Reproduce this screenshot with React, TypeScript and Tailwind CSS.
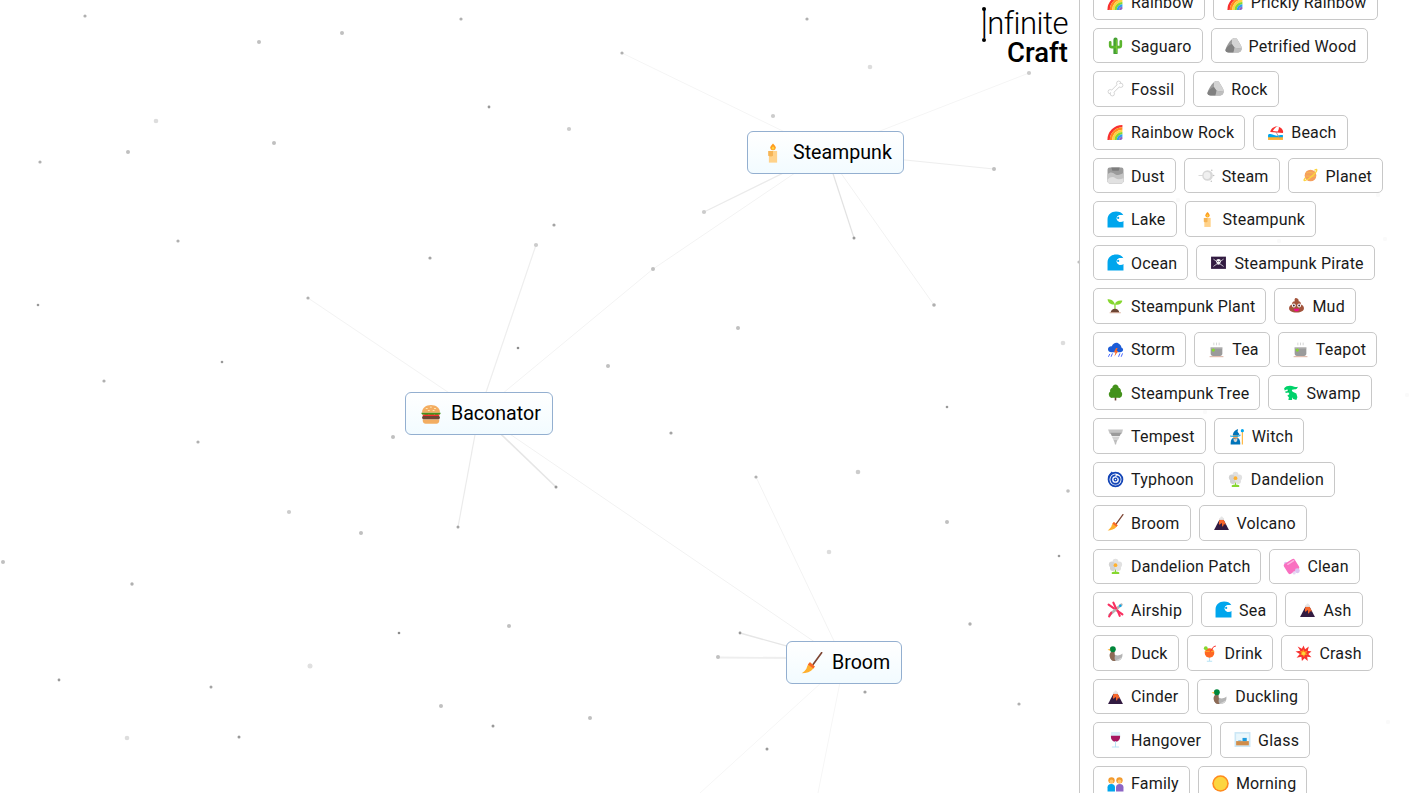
import type { ReactNode } from "react";

const arcs = (rings: [number, string][]) =>
  rings.map(([r, c]) => (
    <path key={r} d={`M${29 - r} 30A${r} ${r} 0 0 1 29 ${30 - r}`} fill="none" stroke={c} strokeWidth="4.4" />
  ));

const wave = (
  <>
    <path d="M1 31V16C1 7 8 1 17 1c6 0 11 2 14 7-5-1-10 0-12 3-2 4 0 8 4 9 3 1 6 0 8-1v12z" fill="#00a6ed" />
    <path d="M19 11c2-3 7-4 12-3v11c-2 1-5 2-8 1-4-1-6-5-4-9z" fill="#fff" />
    <circle cx="21" cy="13" r="2" fill="#00a6ed" />
  </>
);

const rock = (
  <>
    <path d="M1 24C2 18 8 8 13 4c3-3 8-3 10 0l7 12c3 6 1 13-5 13H7c-4 0-7-2-6-5z" fill="#9b9b9b" />
    <path d="M13 4c3-3 8-3 10 0l7 12c1 2 1 4 1 6l-13-2-5-7z" fill="#d3d3d3" />
    <path d="M1 24c1-4 6-9 12-11l5 7-2 9H7c-4 0-7-2-6-5z" fill="#808080" />
    <path d="M16 29l2-9 13 2c0 3-2 7-6 7z" fill="#bebebe" />
  </>
);

const flower = (
  <>
    <path d="M16 20v9" stroke="#86d72f" strokeWidth="2" />
    <path d="M9 27c4-2 10-2 14 0v3H9z" fill="#86d72f" />
    <circle cx="16" cy="7" r="5.5" fill="#e1e1e1" />
    <circle cx="9" cy="12" r="5.5" fill="#d3d3d3" />
    <circle cx="23" cy="12" r="5.5" fill="#e1e1e1" />
    <circle cx="11" cy="19" r="5.5" fill="#d3d3d3" />
    <circle cx="21" cy="19" r="5.5" fill="#e1e1e1" />
    <circle cx="16" cy="13.5" r="3.5" fill="#ffb02e" />
  </>
);

const tea = (
  <>
    <path d="M11 3v5M16 3v5M21 3v5" stroke="#b4b4b4" strokeWidth="1" />
    <path d="M5 12h22v12c0 2-2 4-4 4H9c-2 0-4-2-4-4z" fill="#9b9b9b" />
    <path d="M5 12h22v2H5z" fill="#bebebe" />
    <circle cx="10" cy="17" r="3" fill="#86d72f" />
    <path d="M3 29.5h26" stroke="#d3a28e" strokeWidth="1.6" />
  </>
);

const volcano = (
  <>
    <path d="M12 11 2 30h28L20 11z" fill="#321b41" />
    <path d="M12 11h8l4 8c-1 2-3 1-3-1l-2 5c-1 1-2 0-2-1v-4c-1-1-2 0-3 1-1 2-3 1-3-1z" fill="#f8662a" />
    <path d="M12 11c-2-2 0-4 2-4 0-3 4-3 5 0 2 0 3 2 1 4z" fill="#e6e6e6" />
  </>
);

const duck = (
  <>
    <path d="M5 19c0-4 3-5 4-8h5c1 4-1 6 2 8 4 1 8 1 13-3 1 8-3 14-11 14h-5c-5 0-8-5-8-11z" fill="#b4b4b4" />
    <path d="M5 19c0-4 3-5 4-8h5c0 4 0 7 1 9-1 4-1 7 1 10h-3c-5 0-8-5-8-11z" fill="#8d6a55" />
    <circle cx="11" cy="8" r="5.5" fill="#00863b" />
    <path d="M6 7 1 9l5 2z" fill="#ffb02e" />
    <path d="M16 30c4-3 9-5 12-7-2 5-5 7-10 7z" fill="#d3d3d3" />
  </>
);

const emoji: Record<string, ReactNode> = {
  rainbow: arcs([[26, "#f8312f"], [21.6, "#ff8a1e"], [17.2, "#ffd23e"], [12.8, "#86d72f"], [8.4, "#2f9ff0"], [4, "#8d65c5"]]),
  cactus: (
    <>
      <path d="M16 5v25" stroke="#44a033" strokeWidth="8" strokeLinecap="round" />
      <path d="M6 10v6c0 2 1 3 3 3h5M26 8v8c0 2-1 3-3 3h-5" fill="none" stroke="#5bb52e" strokeWidth="5" strokeLinecap="round" />
      <path d="M17.5 5v25" stroke="#86d72f" strokeWidth="1.6" />
    </>
  ),
  rock,
  bone: (
    <>
      <path d="M8 24 24 8" stroke="#b4b4b4" strokeWidth="7" />
      <circle cx="6" cy="22" r="4" fill="#fff" stroke="#b4b4b4" />
      <circle cx="10" cy="26" r="4" fill="#fff" stroke="#b4b4b4" />
      <circle cx="22" cy="6" r="4" fill="#fff" stroke="#b4b4b4" />
      <circle cx="26" cy="10" r="4" fill="#fff" stroke="#b4b4b4" />
      <path d="M8 24 24 8" stroke="#fff" strokeWidth="5.4" />
    </>
  ),
  beach: (
    <>
      <path d="M2 24h28v6H2z" fill="#ffb02e" />
      <path d="M2 20c6-3 10 2 16 2 5 0 8-2 12-1v4H2z" fill="#00a6ed" />
      <path d="M15 12 24 27" stroke="#9b9b9b" strokeWidth="1.6" />
      <path d="M6 15C8 6 18 1 27 8c3 3 4 6 3 9z" fill="#f8312f" />
      <path d="M11 13c2-5 7-9 11-9 1 3 0 7-2 10z" fill="#fff" />
    </>
  ),
  dust: (
    <>
      <rect x="1" y="1" width="30" height="30" rx="4" fill="#9b9b9b" />
      <path d="M1 14c6-6 10-3 15 0 4 2 10 1 15-3V27c0 2-2 4-4 4H5c-2 0-4-2-4-4z" fill="#c4c4c4" />
      <path d="M1 24c5-6 11-6 15-3 4 3 10 2 15 0v6c0 2-2 4-4 4H5c-2 0-4-2-4-4z" fill="#e1e1e1" />
      <path d="M8 1h16l-2 6H10z" fill="#7d7d7d" />
    </>
  ),
  steam: (
    <>
      <path d="M1 16h12" stroke="#d3d3d3" strokeWidth="1.6" />
      <circle cx="18" cy="16" r="10" fill="#d8d8d8" />
      <circle cx="17" cy="16" r="6.4" fill="#f0f0f0" />
      <circle cx="26" cy="6" r="1.4" fill="#bebebe" />
      <circle cx="29.5" cy="16" r="1.4" fill="#bebebe" />
      <circle cx="25" cy="27" r="1.4" fill="#bebebe" />
    </>
  ),
  planet: (
    <>
      <circle cx="16" cy="16" r="11" fill="#f59f5e" />
      <path d="M8 11c6-1 12 0 17 1M7 17c6 0 13 1 18 0" stroke="#fcd53f" strokeWidth="1.6" fill="none" opacity=".6" />
      <path d="M23 5c3-2 6-2 6 0 1 3-6 11-13 16C10 25 4 28 3 26c-1-1 0-4 3-7l1 2c-2 2-2 3-1 3 2 0 7-3 11-7 6-5 10-10 9-11-1 0-2 1-3 1z" fill="#fcd53f" />
    </>
  ),
  wave,
  candle: (
    <>
      <path d="M10 13h12v17H10z" fill="#ffd28a" />
      <path d="M9 13h7v7c-2 2-5 1-7 0z" fill="#f6b455" />
      <path d="M16 2c3 3 4 5 4 6 0 3-2 4-4 4s-4-1-4-4c0-1 1-3 4-6z" fill="#ff9b1e" />
      <path d="M16 6c1 1 2 2 2 3s-1 2-2 2-2-1-2-2 1-2 2-3z" fill="#ffd23e" />
    </>
  ),
  pirate: (
    <>
      <rect x="2" y="5" width="28" height="23" fill="#321b41" />
      <circle cx="16" cy="14" r="4.4" fill="#f4f4f4" />
      <path d="M14 17h4v3h-4z" fill="#f4f4f4" />
      <path d="M7 10l18 13M25 10 7 23" stroke="#f4f4f4" strokeWidth="1.6" strokeLinecap="round" opacity=".85" />
      <circle cx="14.5" cy="14" r="1" fill="#321b41" />
      <circle cx="17.5" cy="14" r="1" fill="#321b41" />
    </>
  ),
  seedling: (
    <>
      <path d="M15 24V13" stroke="#86d72f" strokeWidth="2.4" />
      <path d="M15 14C13 6 7 4 1 4c1 7 7 11 14 10zM15 14c1-6 7-8 14-7-2 6-7 9-14 7z" fill="#86d72f" />
      <path d="M7 29c0-4 4-7 8-7s8 3 8 7z" fill="#6d4534" />
      <path d="M5 29h21v1.5H5z" fill="#d3a28e" />
    </>
  ),
  poop: (
    <>
      <path d="M14 2c4 0 7 3 6 6 3 0 5 3 4 6 4 1 6 4 6 7 0 5-5 8-14 8S2 26 2 21c0-3 2-6 6-7-1-3 1-6 5-6-1-2-1-4 1-6z" fill="#a2543c" />
      <circle cx="11" cy="16" r="3.6" fill="#fff" />
      <circle cx="21" cy="16" r="3.6" fill="#fff" />
      <circle cx="11" cy="16" r="1.8" fill="#402a32" />
      <circle cx="21" cy="16" r="1.8" fill="#402a32" />
      <path d="M11 22h10c0 3-2 5-5 5s-5-2-5-5z" fill="#f70a8d" />
    </>
  ),
  storm: (
    <>
      <path d="M9 21c-5 0-8-3-7-7 1-3 4-5 7-4 2-5 7-8 12-6 4 2 6 5 6 8 3 1 4 4 3 6s-3 3-5 3z" fill="#1c5cd7" />
      <path d="M17 13l-4 8h3l-2 8 7-10h-3l2-6z" fill="#ff6723" />
      <path d="M5 25l-2 4M10 24l-2 5M24 24l-2 5M29 24l-2 5" stroke="#3f5fff" strokeWidth="1.8" strokeLinecap="round" />
    </>
  ),
  tea,
  tree: (
    <>
      <path d="M14.5 24h3v7h-3z" fill="#6d4534" />
      <path d="M16 1c3 0 6 3 6 6 3 1 5 4 4 7 3 2 3 5 2 8s-4 5-7 4H11c-3 1-6-1-7-4s-1-6 2-8c-1-3 1-6 4-7 0-3 3-6 6-6z" fill="#44911b" />
    </>
  ),
  dragon: (
    <>
      <path d="M4 8c4-5 12-6 19-3 3 1 5 1 7 0-1 3-3 5-6 5l-5 1c-1 2 0 3 2 4l6 3 2 7-2 5-6-2-2-3v5h-7l1-5-3-3 4-3-2-3-5 1-1-3 5-1-1-3-5 2z" fill="#00d26a" />
      <circle cx="12" cy="13" r="1" fill="#0c7a44" />
    </>
  ),
  tornado: (
    <>
      <path d="M2 3h28l-2 8H5z" fill="#c4c4c4" />
      <path d="M6 9h21l-3 6H9z" fill="#9b9b9b" />
      <path d="M9 16h15l-3 6H12z" fill="#d3d3d3" />
      <path d="M12 22h8l-2 5h-4zM14 27h4l-1 4h-2z" fill="#bebebe" />
    </>
  ),
  mage: (
    <>
      <path d="M27 6v25" stroke="#ffb02e" strokeWidth="2" />
      <circle cx="27" cy="5" r="3" fill="#00a6ed" />
      <path d="M5 29c0-7 3-11 9-11s9 4 9 11v2H5z" fill="#0074ba" />
      <circle cx="14" cy="15" r="5" fill="#f7a45b" />
      <path d="M9 13c1-6 4-9 10-11l-1 5 4 5c-4 2-9 2-13 1z" fill="#0074ba" />
      <path d="M4 14c4 1 15 1 20-2l-1 3c-5 2-14 2-19 1z" fill="#00a6ed" />
      <path d="M10 19c1 3 7 3 8 0l-1 6-3 2-3-2z" fill="#d3d3d3" />
    </>
  ),
  cyclone: (
    <>
      <circle cx="16" cy="16" r="13" fill="none" stroke="#1345b7" strokeWidth="3.4" />
      <path d="M10 2c-2 2-5 5-7 9" stroke="#1345b7" strokeWidth="3" />
      <path d="M16 8a8 8 0 1 0 8 8 6 6 0 0 0-6-6" fill="none" stroke="#1345b7" strokeWidth="3.4" />
      <circle cx="16" cy="16" r="2.6" fill="none" stroke="#1345b7" strokeWidth="2.4" />
    </>
  ),
  flower,
  broom: (
    <>
      <path d="M30 1 17 19" stroke="#7d4533" strokeWidth="2.4" strokeLinecap="round" />
      <path d="M13 15l7 6-2 3c-4 5-10 7-17 7 3-2 5-4 7-7 1-4 3-7 5-9z" fill="#ffb02e" />
      <path d="M13 15l7 6-2 3-8-6z" fill="#f8662a" />
    </>
  ),
  volcano,
  soap: (
    <>
      <circle cx="5" cy="10" r="3" fill="#ddc4f0" />
      <rect x="4" y="5" width="24" height="22" rx="4" transform="rotate(-32 16 16)" fill="#f970c0" />
      <path d="M9 12 20 5" stroke="#fbb5df" strokeWidth="2.6" strokeLinecap="round" />
      <circle cx="27" cy="24" r="4.6" fill="#ddc4f0" />
      <circle cx="21" cy="28" r="3" fill="#e6d8f3" />
    </>
  ),
  airship: (
    <>
      <path d="M3 7 29 25" stroke="#f92f60" strokeWidth="4" strokeLinecap="round" />
      <path d="M27 7 5 26" stroke="#b4b4b4" strokeWidth="5" strokeLinecap="round" />
      <path d="M12 3l5 11M4 29l4-7M20 18l4 10" stroke="#f92f60" strokeWidth="4" strokeLinecap="round" />
      <circle cx="25" cy="9" r="2.4" fill="#00a6ed" />
    </>
  ),
  duck,
  drink: (
    <>
      <path d="M16 23v7M11 30.5h10" stroke="#b7e3f5" strokeWidth="2" />
      <circle cx="16" cy="15" r="9" fill="#ff6723" />
      <path d="M7 12h18" stroke="#ffb02e" strokeWidth="1.6" />
      <circle cx="9" cy="6" r="3.6" fill="#86d72f" />
      <path d="M17 13 24 3l4-1" stroke="#f8312f" strokeWidth="1.8" fill="none" />
    </>
  ),
  crash: (
    <>
      <path d="M16 1l3 7 7-5-2 8 7 1-6 5 6 6-8-1 1 8-6-5-5 5-1-8-9 2 6-7-8-5 9-1-5-8 8 4z" fill="#f8312f" />
      <path d="M16 8l2 4 5-1-2 5 3 3-5 0-2 4-3-4-4 0 2-4-3-3 5-1z" fill="#ff8a1e" />
      <circle cx="16" cy="16" r="3.2" fill="#fcd53f" />
    </>
  ),
  wine: (
    <>
      <path d="M8 2h16c2 9 1 18-8 18S6 11 8 2z" fill="#d9eff8" />
      <path d="M7.4 9h17.2c.4 6-2 11-8.6 11S7 15 7.4 9z" fill="#a6165f" />
      <path d="M16 20v9M10 30h12" stroke="#b7e3f5" strokeWidth="2" strokeLinecap="round" />
    </>
  ),
  glass: (
    <>
      <rect x="1" y="2" width="30" height="28" fill="#cbe7f6" />
      <rect x="4" y="5" width="24" height="22" fill="#eaf7fc" />
      <path d="M4 19h24v8H4z" fill="#d08d4a" />
      <path d="M16 13h8v6h-8z" fill="#1c9bdf" />
      <path d="M8 18h6v1H8z" fill="#1c9bdf" />
    </>
  ),
  family: (
    <>
      <path d="M1 31v-8c0-3 2-6 7-6s7 3 7 6v8z" fill="#00a6ed" />
      <path d="M17 31v-8c0-3 2-6 7-6s7 3 7 6v8z" fill="#8d65c5" />
      <circle cx="8.5" cy="10" r="6" fill="#f29a2e" />
      <circle cx="23.5" cy="10" r="6" fill="#f29a2e" />
      <circle cx="8.5" cy="12" r="3.6" fill="#ffc46b" />
      <circle cx="23.5" cy="12" r="3.6" fill="#ffc46b" />
    </>
  ),
  sun: (
    <>
      <circle cx="16" cy="16" r="15.5" fill="#ff8a1e" />
      <circle cx="16" cy="16" r="12.5" fill="#fcd53f" />
    </>
  ),
  burger: (
    <>
      <path d="M3 14C3 7 9 3 16 3s13 4 13 11z" fill="#f3ad61" />
      <path d="M9 8h1.6M15 6h1.6M21 8h1.6M12 11h1.6M19 11h1.6" stroke="#ffe8b5" strokeWidth="1.4" strokeLinecap="round" />
      <path d="M2 14h28c0 2-1 3-3 3l-3 1-3-1-4 1-4-1-4 1-3-1c-3 0-4-1-4-3z" fill="#44911b" />
      <path d="M4 17h24v2H4z" fill="#f8312f" />
      <path d="M3 21c0-1 1-2 2-2h22c1 0 2 1 2 2s-1 3-2 3H5c-1 0-2-2-2-3z" fill="#6d4534" />
      <path d="M4 24h24v2c0 2-2 4-4 4H8c-2 0-4-2-4-4z" fill="#f3ad61" />
    </>
  ),
};

function Emoji({ name, className }: { name: string; className: string }) {
  return (
    <svg viewBox="0 0 32 32" className={className}>
      {emoji[name]}
    </svg>
  );
}

const items = [
  ["rainbow", "Rainbow"],
  ["rainbow", "Prickly Rainbow"],
  ["cactus", "Saguaro"],
  ["rock", "Petrified Wood"],
  ["bone", "Fossil"],
  ["rock", "Rock"],
  ["rainbow", "Rainbow Rock"],
  ["beach", "Beach"],
  ["dust", "Dust"],
  ["steam", "Steam"],
  ["planet", "Planet"],
  ["wave", "Lake"],
  ["candle", "Steampunk"],
  ["wave", "Ocean"],
  ["pirate", "Steampunk Pirate"],
  ["seedling", "Steampunk Plant"],
  ["poop", "Mud"],
  ["storm", "Storm"],
  ["tea", "Tea"],
  ["tea", "Teapot"],
  ["tree", "Steampunk Tree"],
  ["dragon", "Swamp"],
  ["tornado", "Tempest"],
  ["mage", "Witch"],
  ["cyclone", "Typhoon"],
  ["flower", "Dandelion"],
  ["broom", "Broom"],
  ["volcano", "Volcano"],
  ["flower", "Dandelion Patch"],
  ["soap", "Clean"],
  ["airship", "Airship"],
  ["wave", "Sea"],
  ["volcano", "Ash"],
  ["duck", "Duck"],
  ["drink", "Drink"],
  ["crash", "Crash"],
  ["volcano", "Cinder"],
  ["duck", "Duckling"],
  ["wine", "Hangover"],
  ["glass", "Glass"],
  ["family", "Family"],
  ["sun", "Morning"],
];

// [x, y, r, grey]
const dots: [number, number, number, string][] = [
  [85, 16, 1.6, "#b0b0b0"], [259, 42, 2, "#c0c0c0"], [342, 33, 2, "#c0c0c0"], [461, 19, 1.6, "#b0b0b0"], [622, 53, 1.6, "#b0b0b0"],
  [807, 19, 1.6, "#b0b0b0"], [870, 67, 2.3, "#ddd"], [773, 116, 2.1, "#ccc"], [1029, 73, 2.1, "#ccc"], [156, 121, 2.3, "#ddd"],
  [128, 152, 2, "#c0c0c0"], [40, 162, 1.6, "#b0b0b0"], [274, 143, 2, "#c0c0c0"], [489, 107, 1.4, "#999"], [569, 129, 2.1, "#ccc"],
  [994, 169, 2, "#c0c0c0"], [178, 241, 1.6, "#b0b0b0"], [554, 225, 1.6, "#a4a4a4"], [536, 245, 2.1, "#ccc"], [704, 212, 2.1, "#ccc"],
  [854, 238, 1.5, "#999"], [430, 258, 1.6, "#a4a4a4"], [308, 298, 1.6, "#b0b0b0"], [38, 305, 1.3, "#999"], [653, 269, 2, "#c0c0c0"],
  [934, 305, 1.8, "#b0b0b0"], [738, 328, 2, "#c0c0c0"], [1079, 262, 1.6, "#c0c0c0"], [518, 348, 1.3, "#8c8c8c"], [222, 362, 1.3, "#999"],
  [608, 366, 2, "#c0c0c0"], [104, 381, 1.6, "#b0b0b0"], [1063, 343, 2.3, "#ddd"], [393, 437, 2, "#c0c0c0"], [198, 442, 1.6, "#b0b0b0"],
  [671, 433, 1.6, "#a4a4a4"], [947, 407, 1.3, "#999"], [556, 487, 1.5, "#999"], [756, 477, 1.6, "#b0b0b0"], [858, 472, 2.3, "#ccc"],
  [1068, 491, 1.8, "#c0c0c0"], [289, 512, 2.1, "#ccc"], [361, 533, 2, "#c0c0c0"], [458, 527, 1.5, "#a4a4a4"], [947, 522, 2, "#c0c0c0"],
  [829, 552, 2.3, "#ddd"], [1059, 556, 1.3, "#999"], [3, 562, 2, "#c0c0c0"], [132, 584, 1.7, "#b0b0b0"], [509, 626, 2, "#c0c0c0"],
  [399, 633, 1.3, "#8c8c8c"], [740, 633, 1.4, "#999"], [718, 657, 2, "#c0c0c0"], [970, 624, 1.7, "#b0b0b0"], [310, 666, 2.5, "#e0e0e0"],
  [59, 680, 1.4, "#999"], [211, 687, 1.5, "#a4a4a4"], [865, 692, 1.6, "#a4a4a4"], [441, 706, 2, "#c0c0c0"], [1019, 704, 1.6, "#b0b0b0"],
  [590, 718, 2, "#c0c0c0"], [493, 726, 1.5, "#999"], [767, 749, 1.5, "#999"], [127, 738, 2.3, "#ddd"], [239, 737, 1.5, "#999"],
  [1178, 200, 2.2, "#999"], [1378, 195, 2.2, "#999"], [1385, 239, 2.2, "#999"], [1279, 241, 2.2, "#999"], [1407, 395, 2.2, "#999"],
  [1388, 722, 2.2, "#999"], [1205, 412, 2.2, "#999"],
];

// [x1, y1, x2, y2, stroke, width]
const links: [number, number, number, number, string, number][] = [
  [479, 413, 308, 298, "#f3f3f3", 1],
  [479, 413, 536, 245, "#eeeeee", 1.2],
  [479, 413, 458, 527, "#ebebeb", 1.2],
  [479, 413, 556, 487, "#e6e6e6", 1.6],
  [479, 413, 653, 269, "#f3f3f3", 1],
  [479, 413, 844, 662, "#f2f2f2", 1],
  [826, 152, 653, 269, "#f3f3f3", 1],
  [826, 152, 622, 53, "#f5f5f5", 1],
  [826, 152, 1029, 73, "#f5f5f5", 1],
  [826, 152, 994, 169, "#eeeeee", 1],
  [826, 152, 704, 212, "#ebebeb", 1.2],
  [826, 152, 854, 238, "#e2e2e2", 1.2],
  [826, 152, 934, 305, "#f2f2f2", 1],
  [844, 662, 756, 477, "#f3f3f3", 1],
  [844, 662, 740, 633, "#e6e6e6", 1.4],
  [800, 658, 718, 657.5, "#eeeeee", 1.8],
  [844, 662, 700, 793, "#f6f6f6", 1],
  [844, 662, 818, 793, "#f6f6f6", 1],
];

function Node({ icon, label, className }: { icon: string; label: string; className: string }) {
  return (
    <div className={`absolute flex h-[43px] items-center rounded-[6px] border border-[#93afd0] bg-gradient-to-b from-white to-[#f2fbff] pl-[14px] pr-[11px] text-[19.6px] text-black ${className}`}>
      <Emoji name={icon} className="mr-[9px] h-[22px] w-[22px]" />
      {label}
    </div>
  );
}

export default function App() {
  return (
    <div className="flex h-screen w-full overflow-hidden bg-white font-[Roboto,sans-serif]">
      {/* Canvas */}
      <main className="relative flex-1">
        <svg width="1410" height="793" className="absolute left-0 top-0 overflow-visible">
          {links.map(([x1, y1, x2, y2, stroke, width], i) => (
            <line key={i} x1={x1} y1={y1} x2={x2} y2={y2} stroke={stroke} strokeWidth={width} />
          ))}
          {dots.map(([cx, cy, r, fill], i) => (
            <circle key={i} cx={cx} cy={cy} r={r} fill={fill} />
          ))}
        </svg>

        <div className="absolute right-[11px] top-[6px] flex flex-col items-end text-black">
          <div className="flex items-center text-[31px] font-light leading-[36px] tracking-[-0.5px]">
            <span className="relative -mr-[2px] text-[42px] font-extralight leading-[36px]">
              I
              <span className="absolute left-[3px] top-[1px] h-[4px] w-[4px] rounded-full bg-black" />
              <span className="absolute bottom-0 left-[3px] h-[4px] w-[4px] rounded-full bg-black" />
            </span>
            nfinite
          </div>
          <div className="-mt-[3px] text-[27.5px] font-medium leading-[28px]">Craft</div>
        </div>

        <Node icon="burger" label="Baconator" className="left-[405px] top-[392px]" />
        <Node icon="candle" label="Steampunk" className="left-[747px] top-[131px]" />
        <Node icon="broom" label="Broom" className="left-[786px] top-[641px]" />
      </main>

      {/* Sidebar */}
      <aside className="relative z-10 h-full w-[331px] overflow-hidden border-l border-[#c8c8c8] bg-white/95">
        <div className="-mt-[15.5px] flex flex-wrap gap-2 pl-[13px] pr-[12px]">
          {items.map(([icon, label]) => (
            <div key={label} className="flex h-[35.4px] items-center rounded-[5px] border border-[#c8c8c8] bg-white pr-[10px] pt-[2px] text-[16px] leading-none tracking-[0.2px] text-[#1a1a1a]">
              <Emoji name={icon} className="ml-[13px] mr-[7px] -mt-[2px] h-[17px] w-[17px]" />
              {label}
            </div>
          ))}
        </div>
      </aside>
    </div>
  );
}
